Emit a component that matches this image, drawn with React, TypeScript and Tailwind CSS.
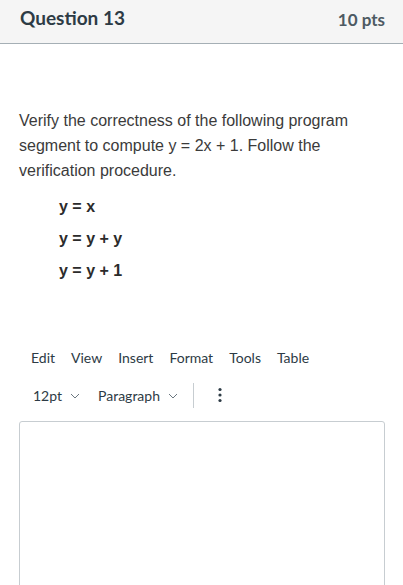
const menu = ['Edit', 'View', 'Insert', 'Format', 'Tools', 'Table'];

const Chevron = () => (
  <svg width="10" height="6" viewBox="0 0 10 6" fill="none" className="ml-[8px] mt-[2px]">
    <path d="M1 1l4 4 4-4" stroke="#6b7780" strokeWidth="1" />
  </svg>
);

const App = () => {
  return (
    <div className="w-[403px] h-[585px] overflow-hidden bg-white text-[#2d3b45]">
      {/* Header */}
      <div className="h-[44px] bg-[#f5f5f5] border-b border-[#a5afb5] flex items-center justify-between pl-[20px] pr-[18px] pb-[6px] font-['Lato',sans-serif]">
        <span className="text-[19px] font-bold text-[#2d3b45]">Question 13</span>
        <span className="text-[17px] font-bold text-[#4d5a63] mt-[2px]">10 pts</span>
      </div>

      {/* Question body */}
      <div className="pt-[64px] px-[19px] font-['Liberation_Sans',Arial,sans-serif] text-[#3b3b3b]">
        <p className="text-[16px] leading-[25px]">
          Verify the correctness of the following program segment to compute y = 2x + 1. Follow the verification procedure.
        </p>
        <div className="pl-[40px] pt-[14px] flex flex-col gap-[12px] text-[16px] font-bold text-[#2b2b2b] leading-[20px]">
          <span>y = x</span>
          <span>y = y + y</span>
          <span>y = y + 1</span>
        </div>
      </div>

      {/* Editor */}
      <div className="mt-[66px] pl-[19px] pr-[18px] font-['Lato',sans-serif] text-[#2d3b45]">
        <div className="flex gap-[16px] pl-[12px] text-[14px]">
          {menu.map((m) => (
            <span key={m}>{m}</span>
          ))}
        </div>
        <div className="flex items-center mt-[14px] pl-[14px] h-[26px] text-[14px]">
          <span>12pt</span>
          <Chevron />
          <span className="ml-[18px]">Paragraph</span>
          <Chevron />
          <div className="ml-[15px] w-px h-[25px] bg-[#c7cdd1]" />
          <svg width="4" height="16" viewBox="0 0 4 16" className="ml-[24px]">
            <circle cx="2" cy="2.5" r="1.6" fill="#2d3b45" />
            <circle cx="2" cy="8" r="1.6" fill="#2d3b45" />
            <circle cx="2" cy="13.5" r="1.6" fill="#2d3b45" />
          </svg>
        </div>
        <div className="mt-[13px] h-[200px] border border-[#c7cdd1] rounded-t-[3px]" />
      </div>
    </div>
  );
};

export default App;
